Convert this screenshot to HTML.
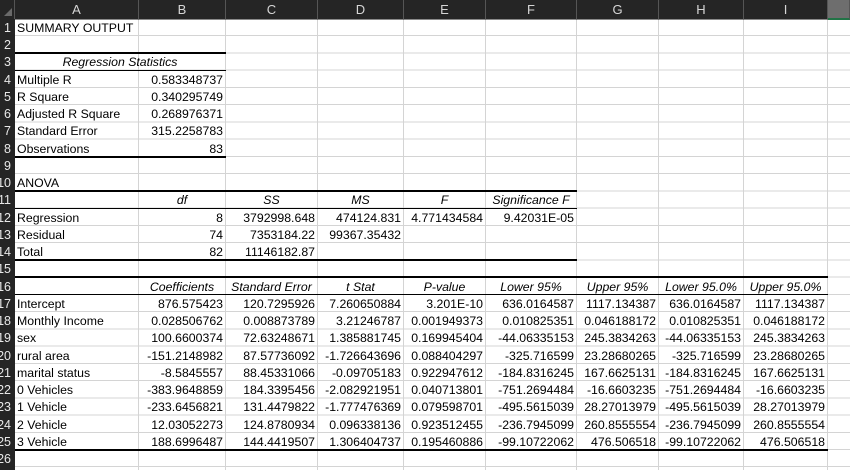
<!DOCTYPE html>
<html><head><meta charset="utf-8"><style>
*{margin:0;padding:0;box-sizing:border-box}
body{width:850px;height:470px;overflow:hidden;background:#fff;font-family:"Liberation Sans",Arial,sans-serif;font-size:12.3px;color:#000;position:relative}
.hdr{position:absolute;left:0;top:0;width:850px;height:19px;background:#252525;display:grid;grid-template-columns:15px 124px 87px 92px 86px 82px 91px 82px 85px 84px 22px}
.hdr div{color:#d6d6d6;font-size:13px;text-align:center;line-height:19px;border-right:1px solid #555;border-bottom:1px solid #8a8a8a}
.rh{position:absolute;left:0;top:19px;width:15px;height:451px;background:#252525;overflow:hidden}
.rn{position:absolute;right:4px;color:#e8e8e8;font-size:12.5px;height:17.24px;line-height:18px;text-align:right;white-space:nowrap}
.grid{position:absolute;left:15px;top:19px;width:835px;height:451px;
background-image:repeating-linear-gradient(to bottom,transparent 0,transparent 16.24px,#d4d4d4 16.24px,#d4d4d4 17.24px)}
.vl{position:absolute;top:19px;width:1px;height:451px;background:#d4d4d4}
.row{position:absolute;left:0;width:850px;height:17.24px;display:grid;grid-template-columns:15px 124px 87px 92px 86px 82px 91px 82px 85px 84px 22px;line-height:18px;white-space:nowrap}
.row span{padding:0 3px 0 2px;overflow:visible}
.r{text-align:right}.c{text-align:center;font-style:italic}
.b{position:absolute;background:#000}
</style></head><body>
<div class="grid"></div>
<div class="vl" style="left:138px"></div><div class="vl" style="left:225px"></div><div class="vl" style="left:317px"></div><div class="vl" style="left:403px"></div><div class="vl" style="left:485px"></div><div class="vl" style="left:576px"></div><div class="vl" style="left:658px"></div><div class="vl" style="left:743px"></div><div class="vl" style="left:827px"></div>
<div class="hdr"><div style="position:relative"><svg width="10" height="10" style="position:absolute;right:1px;bottom:2px"><polygon points="9,1 9,9 1,9" fill="#6a6a6a"/></svg></div><div>A</div><div>B</div><div>C</div><div>D</div><div>E</div><div>F</div><div>G</div><div>H</div><div>I</div><div style="background:#6e6e6e;border-bottom:2px solid #217346"></div></div>
<div class="rh">
<div class="rn" style="top:0">1</div><div class="rn" style="top:17.24px">2</div><div class="rn" style="top:34.48px">3</div><div class="rn" style="top:51.72px">4</div><div class="rn" style="top:68.96px">5</div><div class="rn" style="top:86.2px">6</div><div class="rn" style="top:103.44px">7</div><div class="rn" style="top:120.68px">8</div><div class="rn" style="top:137.92px">9</div><div class="rn" style="top:155.16px">10</div><div class="rn" style="top:172.4px">11</div><div class="rn" style="top:189.64px">12</div><div class="rn" style="top:206.88px">13</div><div class="rn" style="top:224.12px">14</div><div class="rn" style="top:241.36px">15</div><div class="rn" style="top:258.6px">16</div><div class="rn" style="top:275.84px">17</div><div class="rn" style="top:293.08px">18</div><div class="rn" style="top:310.32px">19</div><div class="rn" style="top:327.56px">20</div><div class="rn" style="top:344.8px">21</div><div class="rn" style="top:362.04px">22</div><div class="rn" style="top:379.28px">23</div><div class="rn" style="top:396.52px">24</div><div class="rn" style="top:413.76px">25</div><div class="rn" style="top:431px">26</div>
</div>

<div class="row" style="top:19px"><i></i><span>SUMMARY OUTPUT</span></div>
<div class="row" style="top:53.48px"><i></i><span class="c" style="grid-column:2/4">Regression Statistics</span></div>
<div class="row" style="top:70.72px"><i></i><span>Multiple R</span><span class="r">0.583348737</span></div>
<div class="row" style="top:87.96px"><i></i><span>R Square</span><span class="r">0.340295749</span></div>
<div class="row" style="top:105.2px"><i></i><span>Adjusted R Square</span><span class="r">0.268976371</span></div>
<div class="row" style="top:122.44px"><i></i><span>Standard Error</span><span class="r">315.2258783</span></div>
<div class="row" style="top:139.68px"><i></i><span>Observations</span><span class="r">83</span></div>
<div class="row" style="top:174.16px"><i></i><span>ANOVA</span></div>
<div class="row" style="top:191.4px"><i></i><span></span><span class="c">df</span><span class="c">SS</span><span class="c">MS</span><span class="c">F</span><span class="c">Significance F</span></div>
<div class="row" style="top:208.64px"><i></i><span>Regression</span><span class="r">8</span><span class="r">3792998.648</span><span class="r">474124.831</span><span class="r">4.771434584</span><span class="r">9.42031E-05</span></div>
<div class="row" style="top:225.88px"><i></i><span>Residual</span><span class="r">74</span><span class="r">7353184.22</span><span class="r">99367.35432</span></div>
<div class="row" style="top:243.12px"><i></i><span>Total</span><span class="r">82</span><span class="r">11146182.87</span></div>
<div class="row" style="top:277.6px"><i></i><span></span><span class="c">Coefficients</span><span class="c">Standard Error</span><span class="c">t Stat</span><span class="c">P-value</span><span class="c">Lower 95%</span><span class="c">Upper 95%</span><span class="c">Lower 95.0%</span><span class="c">Upper 95.0%</span></div>
<div class="row" style="top:294.84px"><i></i><span>Intercept</span><span class="r">876.575423</span><span class="r">120.7295926</span><span class="r">7.260650884</span><span class="r">3.201E-10</span><span class="r">636.0164587</span><span class="r">1117.134387</span><span class="r">636.0164587</span><span class="r">1117.134387</span></div>
<div class="row" style="top:312.08px"><i></i><span>Monthly Income</span><span class="r">0.028506762</span><span class="r">0.008873789</span><span class="r">3.21246787</span><span class="r">0.001949373</span><span class="r">0.010825351</span><span class="r">0.046188172</span><span class="r">0.010825351</span><span class="r">0.046188172</span></div>
<div class="row" style="top:329.32px"><i></i><span>sex</span><span class="r">100.6600374</span><span class="r">72.63248671</span><span class="r">1.385881745</span><span class="r">0.169945404</span><span class="r">-44.06335153</span><span class="r">245.3834263</span><span class="r">-44.06335153</span><span class="r">245.3834263</span></div>
<div class="row" style="top:346.56px"><i></i><span>rural area</span><span class="r">-151.2148982</span><span class="r">87.57736092</span><span class="r">-1.726643696</span><span class="r">0.088404297</span><span class="r">-325.716599</span><span class="r">23.28680265</span><span class="r">-325.716599</span><span class="r">23.28680265</span></div>
<div class="row" style="top:363.8px"><i></i><span>marital status</span><span class="r">-8.5845557</span><span class="r">88.45331066</span><span class="r">-0.09705183</span><span class="r">0.922947612</span><span class="r">-184.8316245</span><span class="r">167.6625131</span><span class="r">-184.8316245</span><span class="r">167.6625131</span></div>
<div class="row" style="top:381.04px"><i></i><span>0 Vehicles</span><span class="r">-383.9648859</span><span class="r">184.3395456</span><span class="r">-2.082921951</span><span class="r">0.040713801</span><span class="r">-751.2694484</span><span class="r">-16.6603235</span><span class="r">-751.2694484</span><span class="r">-16.6603235</span></div>
<div class="row" style="top:398.28px"><i></i><span>1 Vehicle</span><span class="r">-233.6456821</span><span class="r">131.4479822</span><span class="r">-1.777476369</span><span class="r">0.079598701</span><span class="r">-495.5615039</span><span class="r">28.27013979</span><span class="r">-495.5615039</span><span class="r">28.27013979</span></div>
<div class="row" style="top:415.52px"><i></i><span>2 Vehicle</span><span class="r">12.03052273</span><span class="r">124.8780934</span><span class="r">0.096338136</span><span class="r">0.923512455</span><span class="r">-236.7945099</span><span class="r">260.8555554</span><span class="r">-236.7945099</span><span class="r">260.8555554</span></div>
<div class="row" style="top:432.76px"><i></i><span>3 Vehicle</span><span class="r">188.6996487</span><span class="r">144.4419507</span><span class="r">1.306404737</span><span class="r">0.195460886</span><span class="r">-99.10722062</span><span class="r">476.506518</span><span class="r">-99.10722062</span><span class="r">476.506518</span></div>

<div class="b" style="left:15px;top:52px;width:211px;height:2px"></div>
<div class="b" style="left:15px;top:70px;width:211px;height:1px"></div>
<div class="b" style="left:15px;top:156px;width:211px;height:2px"></div>
<div class="b" style="left:15px;top:190px;width:562px;height:2px"></div>
<div class="b" style="left:15px;top:208px;width:562px;height:1px"></div>
<div class="b" style="left:15px;top:259px;width:562px;height:2px"></div>
<div class="b" style="left:15px;top:276px;width:813px;height:2px"></div>
<div class="b" style="left:15px;top:294px;width:813px;height:1px"></div>
<div class="b" style="left:15px;top:449px;width:813px;height:2px"></div>
</body></html>
